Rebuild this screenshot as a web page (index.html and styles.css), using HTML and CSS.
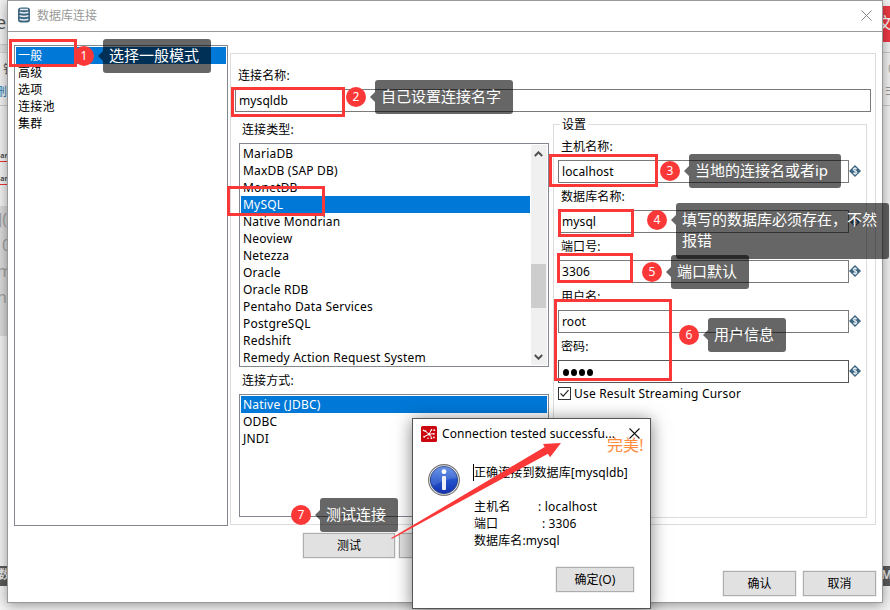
FILE: index.html
```html
<!DOCTYPE html>
<html lang="zh-CN">
<head>
  <meta charset="UTF-8">
  <title>数据库连接</title>
  <link rel="stylesheet" href="styles.css">
</head>
<body>

  <!-- page behind the window -->
  <div class="behind left">
    <span class="txt t-e">e</span>
    <span class="rule r1"></span>
    <span class="txt t-cog">钅</span>
    <span class="txt t-del">刪</span>
    <span class="rule r2"></span>
    <span class="txt t-jar j1">jar</span>
    <span class="txt t-jar j2">jar</span>
    <div class="code"><span>](</span><span class="c0">0</span><span>m</span><span>nl</span></div>
    <div class="bar">数</div>
  </div>
  <div class="behind right">
    <div class="red">文</div>
    <span class="rule r1"></span>
    <span class="txt t-o">0</span>
    <span class="txt t-list">≡</span>
    <span class="rule r2"></span>
    <div class="bar">MD</div>
  </div>

  <div class="window">
    <div class="titlebar">
      <svg class="db-icon" width="14" height="16" viewBox="0 0 14 16">
        <rect x="1" y=".6" width="12" height="14.8" rx="3" fill="#3d6480"/>
        <path d="M3 2.6h8M2.6 5.2q4.4 1.5 8.8 0M2.6 8.7q4.4 1.5 8.8 0M2.6 12.2q4.4 1.5 8.8 0" fill="none" stroke="#e6eef3" stroke-width="1.5"/>
      </svg>
      <span class="title">数据库连接</span>
      <svg class="close" width="11" height="11" viewBox="0 0 11 11"><path d="M.5.5l10 10M10.5.5l-10 10" stroke="#858585"/></svg>
    </div>

    <div class="main">
      <ul class="list nav">
        <li class="selected">一般</li>
        <li>高级</li>
        <li>选项</li>
        <li>连接池</li>
        <li>集群</li>
      </ul>

      <div class="panel">
        <label class="name-label">连接名称:</label>
        <div class="input name">mysqldb</div>

        <div class="columns">
          <div class="types">
            <label>连接类型:</label>
            <div class="list scroll-list">
              <ul>
                <li>MariaDB</li>
                <li>MaxDB (SAP DB)</li>
                <li>MonetDB</li>
                <li class="selected">MySQL</li>
                <li>Native Mondrian</li>
                <li>Neoview</li>
                <li>Netezza</li>
                <li>Oracle</li>
                <li>Oracle RDB</li>
                <li>Pentaho Data Services</li>
                <li>PostgreSQL</li>
                <li>Redshift</li>
                <li>Remedy Action Request System</li>
              </ul>
              <div class="scrollbar">
                <svg width="9" height="6" viewBox="0 0 9 6"><path d="M.8 5l3.7-3.7L8.2 5" fill="none" stroke="#505050" stroke-width="2"/></svg>
                <div class="thumb"></div>
                <svg width="9" height="6" viewBox="0 0 9 6"><path d="M.8 1l3.7 3.7L8.2 1" fill="none" stroke="#505050" stroke-width="2"/></svg>
              </div>
            </div>
            <label>连接方式:</label>
            <ul class="list access">
              <li class="selected">Native (JDBC)</li>
              <li>ODBC</li>
              <li>JNDI</li>
            </ul>
          </div>

          <div class="settings">
            <span class="legend">设置</span>
            <label>主机名称:</label>
            <div class="field"><div class="input">localhost</div><svg class="var" viewBox="0 0 12 12"><path d="M6 0l6 6-6 6-6-6z" fill="#3d6480"/><path d="M8 4.1Q6 2.7 4.6 3.7c-1 1 0 1.8 1.4 2.2 1.8.5 2.4 1.5 1.4 2.4Q6 9.3 4 7.9M6 2v8" fill="none" stroke="#e3edf3" stroke-width="1.1"/></svg></div>
            <label>数据库名称:</label>
            <div class="field"><div class="input">mysql</div><svg class="var" viewBox="0 0 12 12"><path d="M6 0l6 6-6 6-6-6z" fill="#3d6480"/><path d="M8 4.1Q6 2.7 4.6 3.7c-1 1 0 1.8 1.4 2.2 1.8.5 2.4 1.5 1.4 2.4Q6 9.3 4 7.9M6 2v8" fill="none" stroke="#e3edf3" stroke-width="1.1"/></svg></div>
            <label>端口号:</label>
            <div class="field"><div class="input">3306</div><svg class="var" viewBox="0 0 12 12"><path d="M6 0l6 6-6 6-6-6z" fill="#3d6480"/><path d="M8 4.1Q6 2.7 4.6 3.7c-1 1 0 1.8 1.4 2.2 1.8.5 2.4 1.5 1.4 2.4Q6 9.3 4 7.9M6 2v8" fill="none" stroke="#e3edf3" stroke-width="1.1"/></svg></div>
            <label>用户名:</label>
            <div class="field"><div class="input">root</div><svg class="var" viewBox="0 0 12 12"><path d="M6 0l6 6-6 6-6-6z" fill="#3d6480"/><path d="M8 4.1Q6 2.7 4.6 3.7c-1 1 0 1.8 1.4 2.2 1.8.5 2.4 1.5 1.4 2.4Q6 9.3 4 7.9M6 2v8" fill="none" stroke="#e3edf3" stroke-width="1.1"/></svg></div>
            <label>密码:</label>
            <div class="field"><div class="input password"><i></i><i></i><i></i><i></i></div><svg class="var" viewBox="0 0 12 12"><path d="M6 0l6 6-6 6-6-6z" fill="#3d6480"/><path d="M8 4.1Q6 2.7 4.6 3.7c-1 1 0 1.8 1.4 2.2 1.8.5 2.4 1.5 1.4 2.4Q6 9.3 4 7.9M6 2v8" fill="none" stroke="#e3edf3" stroke-width="1.1"/></svg></div>
            <div class="check">
              <svg width="13" height="13" viewBox="0 0 13 13"><rect x=".5" y=".5" width="12" height="12" fill="#fff" stroke="#333"/><path d="M2.5 6.3l2.7 2.9 5.3-6" fill="none" stroke="#222" stroke-width="1.2"/></svg>
              <span>Use Result Streaming Cursor</span>
            </div>
          </div>
        </div>
      </div>
    </div>

    <div class="test-row">
      <div class="button test">测试</div>
      <div class="button test"></div>
    </div>
    <div class="footer">
      <div class="button">确认</div>
      <div class="button">取消</div>
    </div>
  </div>

  <div class="dialog">
    <div class="dialog-title">
      <svg width="16" height="16" viewBox="0 0 16 16">
        <rect width="16" height="16" rx="1.5" fill="#cc0610"/>
        <path d="M8 8.2L4.4 5.2M8 8.2l2.4-4.4M8 8.2l4.6-.4M8 8.2l2.6 3M8 8.2l-4.6 2.4M2.6 4.6l1.8.6" stroke="#fff" stroke-width="1"/>
        <g fill="#fff"><circle cx="4.5" cy="5.2" r=".9"/><circle cx="2.6" cy="4.4" r=".8"/><circle cx="10.5" cy="3.8" r=".9"/><circle cx="13.3" cy="4.2" r=".9"/><circle cx="12.9" cy="7.8" r=".9"/><circle cx="13" cy="11.4" r=".9"/><circle cx="7" cy="12.2" r=".8"/><circle cx="3.2" cy="10.7" r="1"/><circle cx="8" cy="8.2" r="1.2"/><circle cx="10.4" cy="12.2" r=".9"/></g>
      </svg>
      <span class="caption">Connection tested successfu...</span>
      <svg class="dialog-close" width="11" height="11" viewBox="0 0 11 11"><path d="M.5.5l10 10M10.5.5l-10 10" stroke="#111" stroke-width="1.1"/></svg>
    </div>
    <div class="dialog-body">
      <svg width="32" height="32" viewBox="0 0 32 32">
        <defs>
          <linearGradient id="blue" x1="0" y1="0" x2="0" y2="1"><stop offset="0" stop-color="#5585e4"/><stop offset=".5" stop-color="#2455cc"/><stop offset="1" stop-color="#1430ae"/></linearGradient>
        </defs>
        <circle cx="16" cy="16" r="15.4" fill="#e2e2e2" stroke="#777" stroke-width="1.1"/>
        <circle cx="16" cy="16" r="13.6" fill="url(#blue)" stroke="#29448e"/>
        <path d="M3 16a13 13 0 0 1 26-2Q18 14 6 22 3 20 3 16z" fill="#fff" opacity=".13"/>
        <circle cx="16" cy="7.7" r="2.4" fill="#fff"/>
        <rect x="14" y="12" width="4" height="14" rx="1" fill="#eceff5"/>
      </svg>
      <div class="message">
        <p class="caret">正确连接到数据库[mysqldb]</p>
        <p>&nbsp;</p>
        <p><span class="host">主机名</span>: localhost</p>
        <p><span class="port">端口</span>: 3306</p>
        <p>数据库名:mysql</p>
      </div>
    </div>
    <div class="button ok">确定(O)</div>
  </div>

  <!-- annotations -->
  <svg class="arrow" width="890" height="610" viewBox="0 0 890 610"><path d="M391.3 538L544.7 447 543 444l18-1-11 14.3-2-3.6L391.8 539z" fill="#fb3838"/></svg>
  <div class="perfect">完美!</div>

  <div class="mark m1"></div>
  <div class="mark m2"></div>
  <div class="mark m-type"></div>
  <div class="mark m3"></div>
  <div class="mark m4"></div>
  <div class="mark m5"></div>
  <div class="mark m6"></div>

  <div class="num n1">1</div><div class="tip p1">选择一般模式</div>
  <div class="num n2">2</div><div class="tip p2">自己设置连接名字</div>
  <div class="num n3">3</div><div class="tip p3">当地的连接名或者ip</div>
  <div class="num n4">4</div><div class="tip p4">填写的数据库必须存在，不然报错</div>
  <div class="num n5">5</div><div class="tip p5">端口默认</div>
  <div class="num n6">6</div><div class="tip p6">用户信息</div>
  <div class="num n7">7</div><div class="tip p7">测试连接</div>

</body>
</html>
```

FILE: styles.css
```css
* {
  box-sizing: border-box;
}

body {
  margin: 0;
  width: 890px;
  height: 610px;
  position: relative;
  overflow: hidden;
  background: #f4f4f4;
  color: #000;
  font: 12px/17px "Noto Sans", "Noto Sans CJK SC", sans-serif;
  letter-spacing: 0.1px;
}

ul, p {
  margin: 0;
  padding: 0;
  list-style: none;
}

svg {
  display: block;
  flex: none;
}

/* page behind */
.behind {
  position: absolute;
  top: 0;
  height: 610px;
  overflow: hidden;
  color: #555;
}

.behind.left {
  left: 0;
  width: 8px;
}

.behind.right {
  right: 0;
  width: 8px;
}

.rule, .txt, .code, .bar, .red {
  position: absolute;
  left: 0;
}

.rule {
  width: 8px;
  border-top: 1px solid #ccc;
}

.left .r1 { top: 44px; height: 9px; background: #e4e4e4; border-bottom: 1px solid #d4d4d4; }
.right .r1 { top: 52px; }
.r2 { top: 105px; }
.t-e { top: 14px; left: -4px; font-size: 18px; }
.t-cog { top: 61px; left: 3px; }
.t-del { top: 83px; left: -5px; color: #2e7fb8; }

.t-jar {
  left: -2px;
  width: 10px;
  height: 10px;
  font-size: 7px;
  line-height: 8px;
  font-weight: bold;
  border-bottom: 1px solid #ee3434;
}

.j1 { top: 152px; }
.j2 { top: 175px; }

.code {
  top: 206px;
  width: 8px;
  height: 130px;
  background: #dcdcdc;
  color: #a3a3a3;
  font-size: 16px;
  line-height: 26px;
}

.code span {
  display: block;
  margin-left: -3px;
}

.code .c0 {
  margin-left: 2px;
}

.bar {
  top: 566px;
  width: 8px;
  height: 20px;
  background: #5b5b5b;
  color: #e8e8e8;
  font-weight: bold;
}

.left .bar { text-indent: -2px; }
.right .bar { text-indent: -1px; }

.red {
  top: 6px;
  width: 8px;
  height: 36px;
  background: #f03a45;
  color: #fff;
  font-size: 16px;
  line-height: 34px;
  text-indent: -5px;
}

.t-o { top: 60px; left: 6px; color: #aaa; }
.t-list { top: 82px; left: 2px; font-size: 15px; color: #999; }

/* main window */
.window {
  position: absolute;
  left: 7px;
  top: 0;
  width: 876px;
  height: 603px;
  background: #fff;
  border: 1px solid #999;
  box-shadow: 0 2px 12px rgba(0, 0, 0, 0.4);
}

.titlebar {
  height: 31px;
  padding: 0 10px 2px 9px;
  display: flex;
  align-items: center;
  border-bottom: 1px solid #999;
}

.db-icon {
  margin-right: 6px;
}

.title {
  color: #999;
  letter-spacing: 0;
}

.close {
  margin-left: auto;
}

.main {
  display: flex;
  gap: 2px;
  padding: 13px 6px 0;
  height: 493px;
}

.list {
  border: 1px solid #828790;
  background: #fff;
  padding: 1px;
  letter-spacing: 0.2px;
}

.list li {
  height: 17px;
  padding-left: 2px;
  white-space: nowrap;
}

.list .selected {
  background: #0078d7;
  color: #fff;
}

.nav {
  width: 214px;
  height: 481px;
}

.panel {
  width: 646px;
  height: 472px;
  margin-top: 8px;
  border: 1px solid #dcdcdc;
  display: flex;
  flex-direction: column;
}

.panel label {
  display: block;
  height: 17px;
}

.name-label {
  margin: 13px 0 5px 7px;
}

.input {
  height: 23px;
  border: 1px solid #7a7a7a;
  background: #fff;
  padding-left: 3px;
  line-height: 21px;
}

.input.name {
  width: 636px;
  margin-left: 4px;
}

.columns {
  display: flex;
  gap: 4px;
  margin-left: 8px;
}

.types {
  width: 310px;
  padding-top: 9px;
}

.types label {
  padding-left: 3px;
  margin-bottom: 5px;
}

.scroll-list {
  display: flex;
  height: 224px;
  margin-bottom: 5px;
}

.scroll-list ul {
  width: 289px;
}

.scrollbar {
  width: 16px;
  margin-left: 1px;
  padding: 6px 1px 5px 0;
  background: #f0f0f0;
  display: flex;
  flex-direction: column;
  align-items: center;
  height: 220px;
}

.scrollbar .thumb {
  width: 15px;
  height: 44px;
  margin: 107px 0 auto;
  background: #cdcdcd;
}

.access {
  height: 123px;
}

.settings {
  position: relative;
  width: 314px;
  height: 394px;
  margin-top: 12px;
  padding: 13px 4px 0 4px;
  border: 1px solid #dcdcdc;
}

.legend {
  position: absolute;
  left: 6px;
  top: -9px;
  padding: 0 2px;
  background: #fff;
}

.settings label {
  padding-left: 3px;
  margin-bottom: 5px;
}

.field {
  display: flex;
  align-items: center;
  margin-bottom: 5px;
}

.field .input {
  width: 291px;
}

.var {
  width: 12px;
  height: 12px;
  margin-bottom: 2px;
}

.password {
  display: flex;
  align-items: center;
  gap: 2px;
  padding: 2px 0 0 4px;
  border-color: #555;
}

.password i {
  width: 6px;
  height: 7px;
  border-radius: 50%;
  background: #000;
}

.check {
  display: flex;
  align-items: center;
  gap: 3px;
  margin-top: -3px;
  letter-spacing: 0.2px;
}

.button {
  width: 73px;
  height: 25px;
  border: 1px solid #adadad;
  background: #e1e1e1;
  box-shadow: 0 0 0 1px #f0f0f0;
  text-align: center;
  line-height: 24px;
}

.test-row {
  display: flex;
  gap: 4px;
  padding: 8px 0 0 295px;
}

.test {
  width: 92px;
}

.footer {
  display: flex;
  justify-content: flex-end;
  gap: 7px;
  padding: 13px 6px 0;
}

/* message dialog */
.dialog {
  position: absolute;
  left: 412px;
  top: 418px;
  width: 239px;
  height: 191px;
  border: 1px solid #555;
  background: #fff;
  box-shadow: 0 2px 16px rgba(0, 0, 0, 0.5);
}

.dialog-title {
  display: flex;
  align-items: center;
  height: 29px;
  padding: 0 10px 0 8px;
}

.caption {
  margin-left: 5px;
  white-space: nowrap;
}

.dialog-close {
  margin-left: auto;
}

.dialog-body {
  display: flex;
  padding: 16px 0 0 15px;
}

.message {
  margin-left: 14px;
  white-space: nowrap;
}

.caret {
  box-shadow: -1px 0 #000;
}

.host, .port {
  display: inline-block;
  width: 64px;
}

.port {
  width: 68px;
}

.message p:nth-child(3) {
  letter-spacing: 0.2px;
}

.ok {
  width: 78px;
  margin: 18px 0 0 143px;
}

/* annotations */
.arrow {
  position: absolute;
  left: 0;
  top: 0;
}

.perfect {
  position: absolute;
  left: 607px;
  top: 435px;
  color: #ff8b3d;
  font-size: 16px;
  line-height: 20px;
}

.mark {
  position: absolute;
  border: 3px solid #fb3838;
}

.m1 { left: 9px; top: 39px; width: 68px; height: 28px; }
.m2 { left: 231px; top: 87px; width: 114px; height: 30px; }
.m-type { left: 227px; top: 186px; width: 98px; height: 30px; }
.m3 { left: 549px; top: 154px; width: 109px; height: 33px; }
.m4 { left: 558px; top: 209px; width: 76px; height: 28px; }
.m5 { left: 557px; top: 253px; width: 76px; height: 30px; }
.m6 { left: 554px; top: 299px; width: 118px; height: 82px; }

.num {
  position: absolute;
  width: 20px;
  height: 20px;
  border-radius: 50%;
  background: #fb3838;
  color: #fff;
  text-align: center;
  line-height: 20px;
}

.tip {
  position: absolute;
  height: 34px;
  padding: 6px 0 0 6px;
  border-radius: 3px;
  background: rgba(0, 0, 0, 0.6);
  color: #fff;
  font-size: 15px;
  line-height: 21px;
  letter-spacing: 0;
}

.tip::before {
  content: "";
  position: absolute;
  left: -5px;
  top: 12px;
  border: solid transparent;
  border-width: 5px 5px 5px 0;
  border-right-color: rgba(0, 0, 0, 0.6);
}

.n1 { left: 74px; top: 46px; }
.n2 { left: 346px; top: 87px; }
.n3 { left: 660px; top: 161px; }
.n4 { left: 647px; top: 210px; }
.n5 { left: 642px; top: 262px; }
.n6 { left: 679px; top: 325px; }
.n7 { left: 291px; top: 505px; }

.p1 { left: 103px; top: 39px; width: 108px; }
.p2 { left: 375px; top: 80px; width: 138px; }
.p3 { left: 689px; top: 154px; width: 152px; }
.p4 { left: 676px; top: 203px; width: 213px; height: 56px; }
.p5 { left: 671px; top: 255px; width: 78px; }
.p6 { left: 708px; top: 318px; width: 78px; }
.p7 { left: 320px; top: 498px; width: 78px; }
```
